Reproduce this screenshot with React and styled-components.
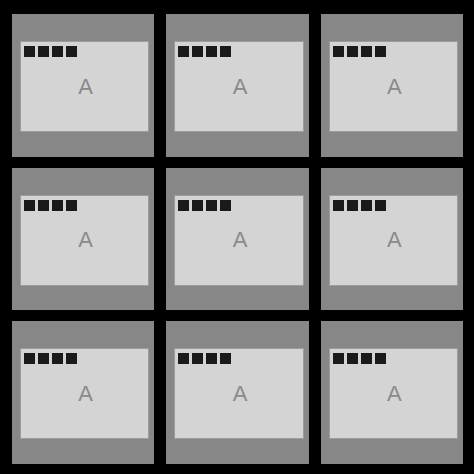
import React from "react";
import styled, { createGlobalStyle } from "styled-components";

const GlobalStyle = createGlobalStyle`
  html, body {
    margin: 0;
    padding: 0;
    background: #000;
  }
  body {
    font-family: "Liberation Sans", Arial, sans-serif;
  }
`;

const Board = styled.div`
  width: 474px;
  height: 474px;
  box-sizing: border-box;
  padding: 14px 11px 10px 12px;
  display: grid;
  grid-template-columns: repeat(3, 1fr);
  grid-template-rows: repeat(3, 1fr);
  column-gap: 12px;
  row-gap: 11px;
  background: #000;
`;

const Cell = styled.div`
  background: #878787;
  padding: 27px 5px 0 8px;
`;

const Panel = styled.div`
  height: 91px;
  box-sizing: border-box;
  background: #d4d4d4;
  border: 1px solid #9c9c9c;
  display: grid;
  grid-template-areas: "stack";
`;

const Dots = styled.div`
  grid-area: stack;
  align-self: start;
  justify-self: start;
  display: flex;
  gap: 3px;
  margin: 4px 0 0 3px;
`;

const Dot = styled.span`
  width: 11px;
  height: 11px;
  background: #1a1a1a;
`;

const Letter = styled.span`
  grid-area: stack;
  align-self: center;
  justify-self: center;
  font-size: 22px;
  font-weight: 400;
  color: #8a8a8a;
  line-height: 1;
  margin-left: 2px;
`;

const cells = Array.from({ length: 9 }, (_, i) => i);

export default function App() {
  return (
    <>
      <GlobalStyle />
      <Board>
        {cells.map((i) => (
          <Cell key={i}>
            <Panel>
              <Dots>
                <Dot />
                <Dot />
                <Dot />
                <Dot />
              </Dots>
              <Letter>A</Letter>
            </Panel>
          </Cell>
        ))}
      </Board>
    </>
  );
}
